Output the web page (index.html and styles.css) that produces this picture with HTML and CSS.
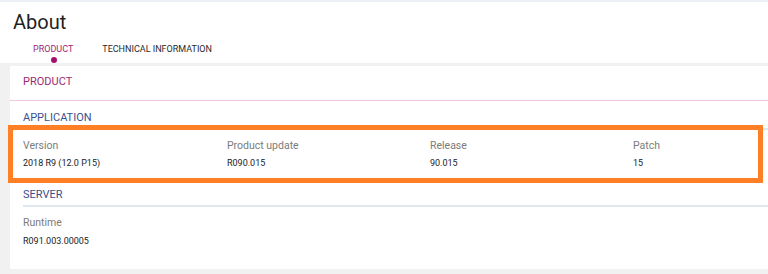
FILE: index.html
```html
<!DOCTYPE html>
<html lang="en">
<head>
  <meta charset="UTF-8">
  <meta name="viewport" content="width=device-width, initial-scale=1.0">
  <link rel="stylesheet" href="styles.css">
  <title>About</title>
</head>
<body>
  <div class="topbar"></div>
  <div class="header">
    <h1 class="title">About</h1>
    <div class="tabs">
      <div class="tab active">PRODUCT</div>
      <div class="tab">TECHNICAL INFORMATION</div>
    </div>
  </div>

  <div class="content">
    <div class="card">
      <div class="section-title product">PRODUCT</div>

      <div class="section-title sub">APPLICATION</div>
      <div class="fields highlighted">
        <div class="field">
          <div class="label">Version</div>
          <div class="value">2018 R9 (12.0 P15)</div>
        </div>
        <div class="field">
          <div class="label">Product update</div>
          <div class="value">R090.015</div>
        </div>
        <div class="field">
          <div class="label">Release</div>
          <div class="value">90.015</div>
        </div>
        <div class="field">
          <div class="label">Patch</div>
          <div class="value">15</div>
        </div>
        <div class="highlight"></div>
      </div>

      <div class="section-title sub">SERVER</div>
      <div class="fields last">
        <div class="field">
          <div class="label">Runtime</div>
          <div class="value">R091.003.00005</div>
        </div>
      </div>
    </div>
  </div>
</body>
</html>
```

FILE: styles.css
```css
body {
  font-family: Roboto, "Liberation Sans", sans-serif;
  margin: 0;
  padding: 0;
  background-color: #f1f1f1;
  overflow: hidden;
}

.topbar {
  height: 2px;
  background-color: #edf0f4;
}

.header {
  background-color: #fff;
  height: 61px;
  padding-left: 13px;
  box-sizing: border-box;
}

.title {
  margin: 0;
  padding-top: 8px;
  font-size: 20px;
  font-weight: 400;
  line-height: 24px;
  color: #1f1f1f;
}

.tabs {
  display: flex;
  gap: 29px;
  padding-left: 20px;
  margin-top: 9px;
}

.tab {
  position: relative;
  font-size: 9px;
  line-height: 12px;
  color: #2a2a2a;
}

.tab.active {
  color: #9c2a76;
}

.tab.active::after {
  content: "";
  position: absolute;
  left: 18px;
  top: 14px;
  width: 6px;
  height: 6px;
  border-radius: 50%;
  background-color: #a3106d;
}

.content {
  padding: 3px 0 7px 10px;
}

.card {
  background-color: #fff;
  padding-bottom: 22px;
}

.section-title {
  font-size: 11px;
  line-height: 13px;
  padding-left: 13px;
}

.section-title.product {
  color: #9c2a72;
  padding-top: 9px;
  padding-bottom: 12px;
  border-bottom: 1px solid #f2c8df;
}

.section-title.sub {
  color: #3b4f8c;
  padding-top: 10px;
  padding-bottom: 4px;
  margin-left: 13px;
  padding-left: 0;
  border-bottom: 2px solid #dfe6ee;
}

.fields {
  position: relative;
  display: grid;
  grid-template-columns: 204px 203px 203px 1fr;
  padding: 9px 0 0 13px;
}

.fields.highlighted {
  padding-bottom: 9px;
}

.label {
  font-size: 10.5px;
  line-height: 14px;
  color: #7b7b7b;
}

.value {
  margin-top: 4px;
  font-size: 9px;
  line-height: 12px;
  color: #222;
}

.fields.last .value {
  margin-top: 5px;
}

.highlight {
  position: absolute;
  left: -2px;
  right: 5px;
  top: -5px;
  bottom: -5px;
  border: 5px solid #ff7f27;
}
```
